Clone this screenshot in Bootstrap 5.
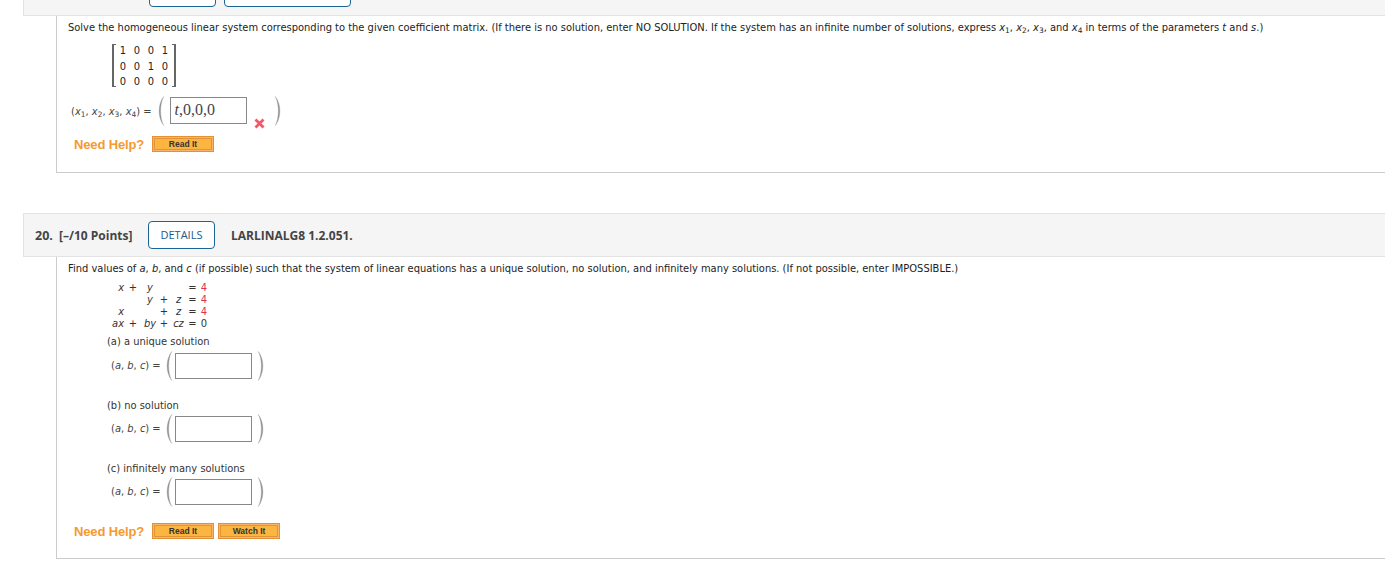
<!DOCTYPE html>
<html lang="en">
<head>
  <meta charset="UTF-8" />
  <title>Homework questions</title>
  <link href="https://cdn.jsdelivr.net/npm/bootstrap@5.3.0/dist/css/bootstrap.min.css" rel="stylesheet" />
  <style>
    body {
      font-family: "DejaVu Sans", Verdana, sans-serif;
      font-size: 9.92px;
      line-height: 12px;
      color: #222;
      background: #fff;
      overflow: hidden;
    }
    .qhead {
      margin-left: 23px;
      background: #f5f5f5;
      border: 1px solid #e3e3e3;
      border-right: 0;
      color: #444;
    }
    .qhead-cut {
      height: 16px;
      border-top: 0;
      overflow: hidden;
      padding-left: 125px;
    }
    .cut-btn {
      height: 20px;
      margin-top: -13px;
      background: #fff;
      border: 1px solid #1a6496;
      border-radius: 4px;
    }
    .qhead-full {
      height: 44px;
      margin-top: 40px;
      padding: 1px 0 0 11px;
      font-family: "Open Sans", sans-serif;
      font-size: 12px;
      font-weight: 700;
    }
    .qnum { width: 24px; font-size: 12.5px; }
    .qpoints { width: 89px; }
    .details-btn {
      width: 67px;
      height: 28px;
      background: #fff;
      border: 1px solid #1a6496;
      border-radius: 4px;
      color: #1a5a8a;
      font-weight: 400;
      font-size: 11px;
      margin: -1px 16px 0 0;
      padding: 0;
    }
    .qbody {
      margin-left: 56px;
      border-left: 1px solid #ccc;
      border-bottom: 1px solid #ccc;
      padding-left: 11px;
    }
    .qbody-one { height: 157px; padding-top: 6px; }
    .qbody-two { height: 302px; padding-top: 6px; }
    .matrix {
      margin: 9px 0 0 44px;
      width: 64px;
      height: 44px;
      display: grid;
      grid-template-columns: repeat(4, 14px);
      justify-content: center;
      text-align: center;
      line-height: 15.5px;
      position: relative;
    }
    .brk {
      position: absolute;
      top: 1px;
      bottom: 0;
      width: 4px;
      border: 1px solid #666;
    }
    .brk-l { left: 0; border-left-width: 2px; border-right: 0; }
    .brk-r { right: 0; border-right-width: 2px; border-left: 0; }
    .solve-row { margin: 8px 0 0 3px; height: 31px; }
    .lab { color: #444; white-space: nowrap; }
    .lab-sub { padding-top: 3px; margin-right: 4px; }
    .lab-part { margin-right: 3px; }
    .paren { display: block; flex: none; }
    .ans-box {
      width: 77px;
      height: 27px;
      border: 1px solid #888;
      background: #fff;
      font-family: "Liberation Serif", serif;
      font-size: 16px;
      line-height: 24px;
      padding-left: 4px;
      color: #444;
      margin-left: 5px;
    }
    .wrong-mark { margin: 25px 9px 0 7px; flex: none; }
    .help-row { margin-left: 6px; }
    .help-one { margin-top: 10px; }
    .help-two { margin-top: 16px; }
    .help-word {
      font-family: "Liberation Sans", Arial, sans-serif;
      font-size: 13px;
      font-weight: 700;
      color: #f59a30;
      margin: 1px 8px 0 0;
      letter-spacing: -0.15px;
    }
    .help-btn {
      width: 62px;
      height: 16px;
      background: #fbb540;
      border: 1px solid #e59032;
      box-shadow: inset 0 0 0 1px #f7b46a, inset 0 0 0 2px #e0953a;
      font-family: "Liberation Sans", Arial, sans-serif;
      font-size: 8.5px;
      font-weight: 700;
      line-height: 15px;
      text-align: center;
      color: #333;
    }
    .eqs {
      margin: 7px 0 0 43px;
      display: grid;
      grid-template-columns: 13px 18px 16px 12px 17px 11px 12px;
      line-height: 12px;
      color: #333;
      text-align: center;
    }
    .red-num { color: #d8344a; }
    .part-label { margin-left: 39px; color: #333; }
    .part-first { margin-top: 6px; }
    .part-next { margin-top: 19px; }
    .part-row { margin: 2px 0 0 43px; height: 30px; }
    .part-row-first { margin-top: 3px; }
    .part-box {
      width: 77px;
      height: 26px;
      border: 1px solid #888;
      background: #fff;
      margin: 0 5px 0 2px;
    }
  </style>
</head>
<body>

<svg width="0" height="0" class="d-block">
  <defs>
    <path id="paren-left" d="M7.8 .5 C1.5 8 1.5 22 7.8 29.5 C3.6 22 3.6 8 7.8 .5 Z" fill="#8c8c8c" stroke="#aaa" stroke-width=".4"/>
    <path id="paren-right" d="M1.2 .5 C7.5 8 7.5 22 1.2 29.5 C5.4 22 5.4 8 1.2 .5 Z" fill="#8c8c8c" stroke="#aaa" stroke-width=".4"/>
  </defs>
</svg>

<div class="qhead qhead-cut d-flex gap-2">
  <div class="cut-btn" style="width: 67px"></div>
  <div class="cut-btn" style="width: 127px"></div>
</div>

<div class="qbody qbody-one">
  <div>Solve the homogeneous linear system corresponding to the given coefficient matrix. (If there is no solution, enter NO SOLUTION. If the system has an infinite number of solutions, express <i>x</i><sub>1</sub>, <i>x</i><sub>2</sub>, <i>x</i><sub>3</sub>, and <i>x</i><sub>4</sub> in terms of the parameters <i>t</i> and <i>s</i>.)</div>

  <div class="matrix">
    <span class="brk brk-l"></span>
    <span class="brk brk-r"></span>
    <span>1</span><span>0</span><span>0</span><span>1</span>
    <span>0</span><span>0</span><span>1</span><span>0</span>
    <span>0</span><span>0</span><span>0</span><span>0</span>
  </div>

  <div class="solve-row d-flex align-items-center">
    <span class="lab lab-sub">(<i>x</i><sub>1</sub>, <i>x</i><sub>2</sub>, <i>x</i><sub>3</sub>, <i>x</i><sub>4</sub>) =</span>
    <svg class="paren" width="9" height="30" viewBox="0 0 9 30"><use href="#paren-left"/></svg>
    <div class="ans-box"><i>t</i>,0,0,0</div>
    <svg class="wrong-mark" width="11" height="11" viewBox="0 0 11 11"><path d="M1.5 1.5 L9.5 9.5 M9.5 1.5 L1.5 9.5" stroke="#ef5a66" stroke-width="2.8"/></svg>
    <svg class="paren" width="9" height="30" viewBox="0 0 9 30"><use href="#paren-right"/></svg>
  </div>

  <div class="help-row help-one d-flex align-items-center">
    <span class="help-word">Need Help?</span>
    <div class="help-btn">Read It</div>
  </div>
</div>

<div class="qhead qhead-full d-flex align-items-center">
  <span class="qnum">20.</span>
  <span class="qpoints">[–/10 Points]</span>
  <button type="button" class="details-btn">DETAILS</button>
  <span>LARLINALG8 1.2.051.</span>
</div>

<div class="qbody qbody-two">
  <div>Find values of <i>a</i>, <i>b</i>, and <i>c</i> (if possible) such that the system of linear equations has a unique solution, no solution, and infinitely many solutions. (If not possible, enter IMPOSSIBLE.)</div>

  <div class="eqs">
    <i class="text-end">x</i><span>+</span><i>y</i><span></span><span></span><span>=</span><span class="red-num">4</span>
    <span></span><span></span><i>y</i><span>+</span><i>z</i><span>=</span><span class="red-num">4</span>
    <i class="text-end">x</i><span></span><span></span><span>+</span><i>z</i><span>=</span><span class="red-num">4</span>
    <i class="text-end">ax</i><span>+</span><i>by</i><span>+</span><i>cz</i><span>=</span><span>0</span>
  </div>

  <div class="part-label part-first">(a) a unique solution</div>
  <div class="part-row part-row-first d-flex align-items-center">
    <span class="lab lab-part">(<i>a</i>, <i>b</i>, <i>c</i>) =</span>
    <svg class="paren" width="9" height="30" viewBox="0 0 9 30"><use href="#paren-left"/></svg>
    <div class="part-box"></div>
    <svg class="paren" width="9" height="30" viewBox="0 0 9 30"><use href="#paren-right"/></svg>
  </div>

  <div class="part-label part-next">(b) no solution</div>
  <div class="part-row d-flex align-items-center">
    <span class="lab lab-part">(<i>a</i>, <i>b</i>, <i>c</i>) =</span>
    <svg class="paren" width="9" height="30" viewBox="0 0 9 30"><use href="#paren-left"/></svg>
    <div class="part-box"></div>
    <svg class="paren" width="9" height="30" viewBox="0 0 9 30"><use href="#paren-right"/></svg>
  </div>

  <div class="part-label part-next">(c) infinitely many solutions</div>
  <div class="part-row d-flex align-items-center">
    <span class="lab lab-part">(<i>a</i>, <i>b</i>, <i>c</i>) =</span>
    <svg class="paren" width="9" height="30" viewBox="0 0 9 30"><use href="#paren-left"/></svg>
    <div class="part-box"></div>
    <svg class="paren" width="9" height="30" viewBox="0 0 9 30"><use href="#paren-right"/></svg>
  </div>

  <div class="help-row help-two d-flex align-items-center">
    <span class="help-word">Need Help?</span>
    <div class="help-btn me-1">Read It</div>
    <div class="help-btn">Watch It</div>
  </div>
</div>

<script src="https://cdn.jsdelivr.net/npm/bootstrap@5.3.0/dist/js/bootstrap.bundle.min.js"></script>
</body>
</html>
